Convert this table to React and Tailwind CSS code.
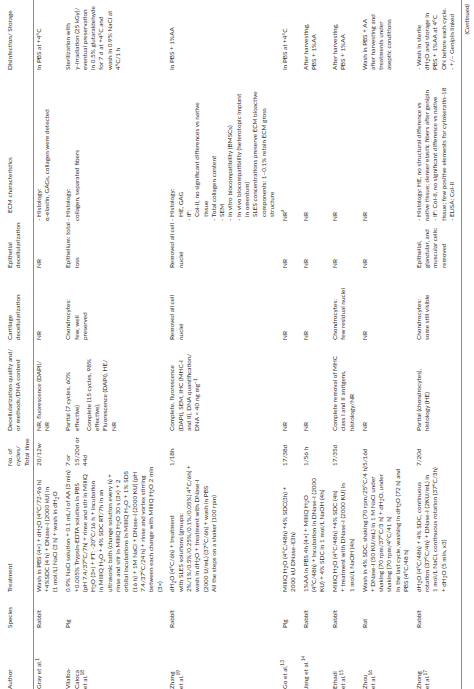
import React from "react";

// column widths of the unrotated table, 689px in all
const cols = "grid grid-cols-[61px_36px_126px_35px_91px_72px_47px_151px_70px]";

function W() {
  return (
    <>
      H<sub>2</sub>O
    </>
  );
}

function Cell({ lines = [], className = "" }) {
  return (
    <div className={className}>
      {lines.map((l, i) => (
        <div key={i} className="whitespace-nowrap">
          {l}
        </div>
      ))}
    </div>
  );
}

function Row({ cells, last }) {
  return (
    <div className={`${cols} pb-[4.5px] ${last ? "border-b border-[#8c8c8c]" : ""}`}>
      {cells.map((c, i) =>
        React.isValidElement(c) && c.type === "div" ? (
          <React.Fragment key={i}>{c}</React.Fragment>
        ) : (
          <Cell key={i} lines={Array.isArray(c) ? c : [c]} />
        )
      )}
    </div>
  );
}

const rows = [
  [
    <>Gray et al.<sup>1</sup></>,
    "Rabbit",
    [
      <>Wash in PBS (4×) + dH<sub>2</sub>O (4°C/72-96 h)</>,
      "+4%SDC (4 h) + DNase-I (2000 kU) in",
      <>(1 mol/L) NaCl (3 h) + wash in dH<sub>2</sub>O</>,
    ],
    "20/12w",
    ["NR, fluorescence (DAPI)/", "NR"],
    "NR",
    "NR",
    ["- Histology:", "α-elastin, GAGs, collagen were detected"],
    "In PBS at +4°C",
  ],
  [
    ["Vilalba-", "Caloca", <>et al.<sup>18</sup></>],
    "Pig",
    [
      "0.9% NaCl solution + 0.1 mL/l of AA (3 min)",
      "+0.005% Trypsin-EDTA solution in PBS",
      "(pH 7.4/37°C/7h) + rinse and stir in MilliQ",
      <><W /> (3×) + FT: -20°C/16 h + incubation</>,
      <>in MilliQ <W /> + 4% SDC RT/7h in an</>,
      "ultrasonic bath (change solution every h) +",
      <>rinse and stir in MilliQ <W /> 30 s (3×) + 2</>,
      <>orbital incubations in MilliQ <W /> + 1% SDS</>,
      "(16 h) + 1M NaCl + DNase-I (2000 KU) (pH",
      "7.4/37°C/24 h) + rinse and vortex stirring",
      <>between each change with MilliQ <W /> 2 min</>,
      "(3×)",
    ],
    ["7 or", "15/20d or", "44d"],
    <div key="d">
      <div className="whitespace-nowrap">Partial (7 cycles, 60%</div>
      <div className="whitespace-nowrap">effective)</div>
      <div className="whitespace-nowrap mt-[4px]">Complete (15 cycles, 98%</div>
      <div className="whitespace-nowrap">effective),</div>
      <div className="whitespace-nowrap">Fluorescence (DAPI), HE/</div>
      <div className="whitespace-nowrap">NR</div>
    </div>,
    ["Chondrocytes:", "few, well", "preserved"],
    ["Epithelium: total", "loss"],
    ["- Histology:", "collagen, separated fibers"],
    [
      "Sterilization with",
      "γ-irradiation (25 kGy)/",
      "eventual preservation",
      "in 0.5% glutaraldehyde",
      "for 7 d at +4°C and",
      "wash in 0.9% NaCl at",
      "4°C/1 h",
    ],
  ],
  [
    ["Zhang", <>et al.<sup>19</sup></>],
    "Rabbit",
    [
      <>d<W /> (4°C/6h) + treatment</>,
      "with SLES solutions (groups:",
      "2%/1%/0.5%/0.25%/0.1%/0.05%) 4°C/6h) +",
      <>wash in d<W /> + treatment with DNase-I</>,
      "(2000 U/mL) (37°C/6h) + wash in PBS",
      "All the steps on a shaker (100 rpm)",
    ],
    "1/18h",
    [
      "Complete, fluorescence",
      "(DAPI), SEM, IHC (MHC-I",
      "and II), DNA quantification/",
      <>DNA &lt; 40 ng mg<sup>−1</sup></>,
    ],
    ["Removed all cell", "nuclei"],
    ["Removed all cell", "nuclei"],
    <div key="e">
      <div className="whitespace-nowrap">- Histology:</div>
      <div className="whitespace-nowrap pl-[4px]">HE, GAG</div>
      <div className="whitespace-nowrap">- IF:</div>
      <div className="whitespace-nowrap pl-[4px]">Col-II, no significant differences vs native</div>
      <div className="whitespace-nowrap pl-[4px]">tissue</div>
      <div className="whitespace-nowrap">- Total collagen content</div>
      <div className="whitespace-nowrap">- SEM</div>
      <div className="whitespace-nowrap">- In vitro biocompatibility (BMSCs)</div>
      <div className="whitespace-nowrap">- In vivo biocompatibility (heterotopic implant</div>
      <div className="whitespace-nowrap pl-[4px]">in omentum)</div>
      <div className="whitespace-nowrap pl-[4px]">SLES concentrations preserve ECM bioactive</div>
      <div className="whitespace-nowrap pl-[4px]">components: 1–0.1% retain ECM gross</div>
      <div className="whitespace-nowrap pl-[4px]">structure</div>
    </div>,
    "In PBS + 1%AA",
  ],
  [
    <>Go et al.<sup>13</sup></>,
    "Pig",
    [<>MilliQ <W /> (4°C/48h) +4% SDC(3h) +</>, "2000 kU DNase-I(3h)"],
    "17/38d",
    "NR",
    "NR",
    "NR",
    <>NR<sup>a</sup></>,
    "In PBS at +4°C",
  ],
  [
    <>Jang et al.<sup>14</sup></>,
    "Rabbit",
    [
      <>1%AA in PBS 4h (4×) + MilliQ <W /></>,
      "(4°C/48h) + incubation in DNase-I (2000",
      "KU) + 4% SDC in 1 mol/L NaOH (4h)",
    ],
    "1/56 h",
    "NR",
    "NR",
    "NR",
    "NR",
    ["After harvesting,", "PBS + 1%AA"],
  ],
  [
    ["Erhadi", <>et al.<sup>15</sup></>],
    "Rabbit",
    [
      <>MilliQ <W /> (4°C/48h) +4% SDC (4h)</>,
      "+ treatment with DNase-I (2000 KU) in",
      "1 mol/L NaOH (4h)",
    ],
    "17/35d",
    ["Complete removal of MHC", "class I and II antigens,", "histology/NR"],
    ["Chondrocytes:", "few residual nuclei"],
    "NR",
    "NR",
    ["After harvesting,", "PBS + 1%AA"],
  ],
  [
    ["Zhou", <>et al.<sup>16</sup></>],
    "Rat",
    [
      "Wash in 4% SDC, shaking (70 rpm/25°C/4 h)",
      "+ DNase-I (50 KU/mL) in 1 M NaCl under",
      <>shaking (70 rpm/37°C/3 h) + d<W />, under</>,
      "shaking (70 rpm/4°C/41 h)",
      <>In the last cycle, washing in d<W /> (72 h) and</>,
      "PBS (4°C/48 h)",
    ],
    "5/16d",
    "NR",
    "NR",
    "NR",
    "NR",
    ["Wash in PBS + AA", "after harvesting and", "treatments under", "aseptic conditions"],
  ],
  [
    ["Zhong", <>et al.<sup>17</sup></>],
    "Rabbit",
    [
      <>d<W /> (4°C/48h) + 4% SDC, continuous</>,
      "rotation (37°C/4h) + DNase-I (2KU/mL) in",
      "1 mol/L NaCl, continuous rotation (37°C/3h)",
      <>+ d<W /> (5 min, x3)</>,
    ],
    "7/20d",
    ["Partial (chondrocytes),", "histology (HE)"],
    ["Chondrocytes:", "some still visible"],
    ["Epithelial,", "glandular, and", "muscular cells:", "removed"],
    [
      "- Histology: HE, no structural difference vs",
      "native tissue; denser elastic fibers after genipin",
      "- IF: Col-II, no significant difference vs native",
      "tissue; few positive elements for cytokeratin-18",
      "- ELISA: Col-II",
    ],
    [
      "- Wash in sterile",
      <>d<W /> and storage in</>,
      "PBS + 1%AA at 4°C",
      "ON before each cycle.",
      "- +/− Genipin linked",
    ],
  ],
];

const header = [
  ["Author"],
  ["Species"],
  ["Treatment"],
  ["No. of", "cycles/", "Total time"],
  ["Decellularization quality and/", "or methods/DNA content"],
  ["Cartilage", "decellularization"],
  ["Epithelial", "decellularization"],
  ["ECM characteristics"],
  ["Disinfection/ Storage"],
];

export default function App() {
  return (
    <div className="w-[474px] h-[689px] overflow-hidden bg-white">
      {/* the table is set on its side, read from the bottom up */}
      <div className="w-[689px] h-[474px] origin-top-left [transform:translateY(689px)_rotate(-90deg)] text-[6.4px] leading-[8.3px] text-[#2e2e2e] [font-family:Lato,'Open_Sans',sans-serif]">
        <div className={`${cols} pt-[6px] pb-[2px] mb-[1px] border-b border-[#8c8c8c]`}>
          {header.map((h, i) => (
            <Cell key={i} lines={h} className={i === 7 ? "pl-[8px]" : ""} />
          ))}
        </div>
        {rows.map((r, i) => (
          <Row key={i} cells={r} last={i === rows.length - 1} />
        ))}
        <div className="text-right italic pt-[1px] pr-[4px]">(Continued)</div>
      </div>
    </div>
  );
}
